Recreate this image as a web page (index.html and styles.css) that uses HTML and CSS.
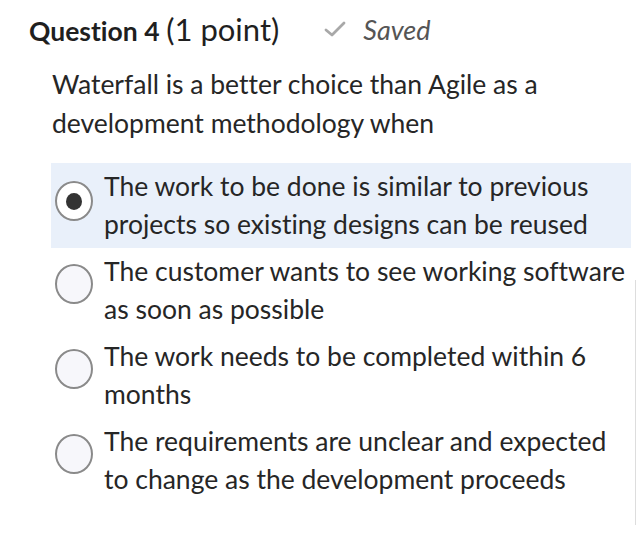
FILE: index.html
```html
<!DOCTYPE html>
<html lang="en">
<head>
<meta charset="utf-8">
<title>Question 4</title>
<link rel="stylesheet" href="styles.css">
</head>
<body>
<div class="page">
  <div class="question">
    <div class="header">
      <h2 class="title"><span class="qnum">Question 4</span> <span class="points">(1 point)</span></h2>
      <div class="status">
        <svg class="check" width="24" height="20" viewBox="0 0 24 20" aria-hidden="true"><path d="M3 11 L9 16 L21 4" fill="none" stroke="#a8a8a8" stroke-width="2.8" stroke-linecap="round" stroke-linejoin="round"/></svg>
        <span class="saved">Saved</span>
      </div>
    </div>
    <p class="prompt">Waterfall is a better choice than Agile as a development methodology when</p>
    <div class="options">
      <label class="option selected">
        <span class="radio"><span class="dot"></span></span>
        <span class="text">The work to be done is similar to previous projects so existing designs can be reused</span>
      </label>
      <label class="option">
        <span class="radio"></span>
        <span class="text">The customer wants to see working software as soon as possible</span>
      </label>
      <label class="option">
        <span class="radio"></span>
        <span class="text">The work needs to be completed within 6 months</span>
      </label>
      <label class="option">
        <span class="radio"></span>
        <span class="text">The requirements are unclear and expected to change as the development proceeds</span>
      </label>
    </div>
  </div>
  <div class="edge"></div>
</div>
</body>
</html>
```
FILE: styles.css
```css
html, body {
  margin: 0;
  padding: 0;
  background: #ffffff;
}
body {
  font-family: Lato, "Open Sans", sans-serif;
  font-variant-ligatures: none;
  color: #222222;
}
.page {
  display: flex;
  width: 641px;
  height: 558px;
  overflow: hidden;
}
.question {
  width: 580px;
  padding: 8px 0 0 29px;
}
.header {
  display: flex;
  align-items: center;
  gap: 44px;
  height: 42px;
}
.title {
  margin: 0;
  font-size: 26px;
  font-weight: 400;
  color: #1f1f1f;
  white-space: nowrap;
}
.qnum {
  font-weight: 700;
  font-size: 26.5px;
}
.points {
  font-size: 31px;
}
.status {
  display: flex;
  align-items: center;
  gap: 16px;
  color: #555555;
}
.check {
  display: block;
}
.saved {
  font-style: italic;
  font-size: 27px;
}
.prompt {
  margin: 15px 0 0 23px;
  font-size: 26.5px;
  line-height: 39px;
  width: 560px;
  color: #262626;
}
.options {
  margin: 20px 0 0 22px;
  width: 580px;
  display: flex;
  flex-direction: column;
}
.option {
  display: flex;
  align-items: flex-start;
  gap: 11px;
  padding: 4px 0 5px 4px;
  font-size: 26.5px;
  line-height: 38px;
  color: #262626;
}
.option.selected {
  background: #e9f0fa;
}
.radio {
  flex: none;
  width: 38px;
  height: 40px;
  margin-top: 12px;
  box-sizing: border-box;
  border: 2px solid #8a8a8a;
  border-radius: 50%;
  background: #f7f7fb;
  display: flex;
  align-items: center;
  justify-content: center;
}
.option.selected .radio {
  margin-top: 14px;
  background: #ffffff;
}
.dot {
  width: 16px;
  height: 17px;
  border-radius: 50%;
  background: #333333;
}
.text {
  flex: 1;
}
.edge {
  margin: 280px 0 0 26px;
  width: 1px;
  height: 245px;
  background: #dddddd;
}
```
